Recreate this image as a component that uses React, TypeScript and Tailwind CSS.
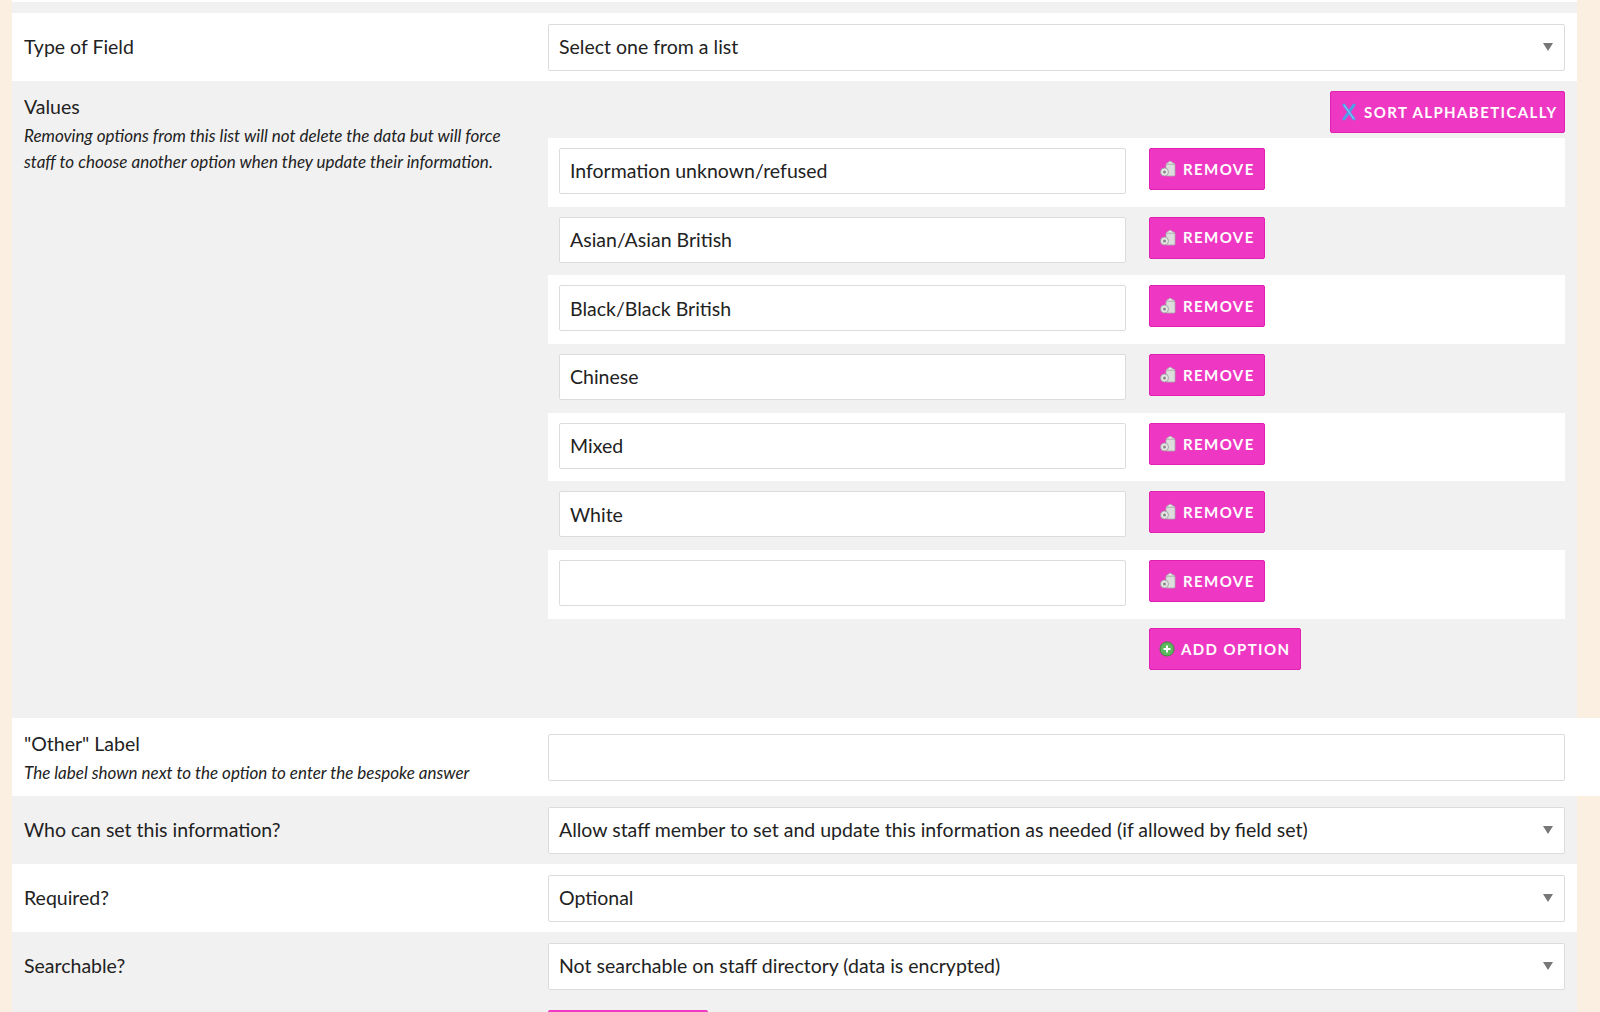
import React from "react";

const Arrow = () => (
  <svg width="10" height="8" viewBox="0 0 10 8" className="absolute right-[11px] top-1/2 -translate-y-1/2"><path d="M0 0h10L5 8z" fill="#777" /></svg>
);

const Select = ({ text }: { text: string }) => (
  <div className="relative h-[47px] w-[1017px] bg-white border border-[#dcdcdc] rounded-[2px] flex items-center pl-[10px] text-[19.5px] text-[#222]">
    {text}
    <Arrow />
  </div>
);

const RemoveIcon = () => (
  <svg width="18" height="18" viewBox="0 0 18 18">
    <rect x="7" y="4" width="9" height="12" rx="1" fill="#ddd" stroke="#aaa" strokeWidth="0.8" />
    <path d="M7 4l4-3 5 3z" fill="#eee" stroke="#aaa" strokeWidth="0.8" />
    <circle cx="5.5" cy="12" r="4" fill="#e6e6e6" stroke="#999" strokeWidth="0.8" />
    <circle cx="5.5" cy="12" r="1.5" fill="#888" />
  </svg>
);

const Btn = ({ icon, label, w }: { icon: React.ReactNode; label: string; w: string }) => (
  <div className={`h-[42px] ${w} bg-[#ee38c3] border border-[#e020b0] rounded-[2px] flex items-center pl-[9px] gap-[6px] text-white font-bold text-[15px] tracking-[1.4px]`}>
    {icon}
    <span>{label}</span>
  </div>
);

const options = ["Information unknown/refused", "Asian/Asian British", "Black/Black British", "Chinese", "Mixed", "White", ""];

export default function App() {
  return (
    <div className="w-[1600px] h-[1012px] overflow-hidden bg-[#fbefe2] text-[#222]" style={{ fontFamily: "Lato, 'Noto Sans', sans-serif" }}>
      <div className="ml-[12px] w-[1565px]">
        <div className="h-[13px] bg-[#f1f1f1] border-t-[2px] border-white" />
        <div className="h-[68px] bg-white flex items-center">
          <div className="w-[536px] pl-[12px] text-[19.5px]">Type of Field</div>
          <Select text="Select one from a list" />
        </div>
        <div className="h-[637px] bg-[#f1f1f1] flex">
          <div className="w-[536px] pl-[12px] pt-[11px] pr-[18px]">
            <div className="text-[19.5px]">Values</div>
            <div className="italic text-[17px] leading-[26px] mt-[2px]">Removing options from this list will not delete the data but will force staff to choose another option when they update their information.</div>
          </div>
          <div className="w-[1017px] pt-[10px]">
            <div className="flex justify-end">
              <Btn w="w-[235px]" label="SORT ALPHABETICALLY" icon={
                <svg width="18" height="18" viewBox="0 0 18 18"><path d="M4 2l10 14M14 2L4 16" stroke="#4aa3e8" strokeWidth="3" strokeLinecap="round" /><path d="M4 2l10 14" stroke="#8fd0ff" strokeWidth="1" /></svg>
              } />
            </div>
            <div className="mt-[5px]">
              {options.map((o, i) => (
                <div key={i} className={`h-[68.7px] flex pt-[10px] ${i % 2 === 0 ? "bg-white" : "bg-[#f1f1f1]"}`}>
                  <div className="ml-[11px] w-[567px] h-[46px] bg-white border border-[#dcdcdc] rounded-[2px] flex items-center pl-[10px] text-[19.5px]">{o}</div>
                  <div className="ml-[23px]">
                    <Btn w="w-[116px]" label="REMOVE" icon={<RemoveIcon />} />
                  </div>
                </div>
              ))}
              <div className="ml-[601px] mt-[9px]">
                <Btn w="w-[152px]" label="ADD OPTION" icon={
                  <svg width="16" height="16" viewBox="0 0 16 16"><circle cx="8" cy="8" r="7" fill="#5cb85c" stroke="#3d8b3d" /><path d="M8 4.5v7M4.5 8h7" stroke="#fff" strokeWidth="2" /></svg>
                } />
              </div>
            </div>
          </div>
        </div>
        <div className="h-[78px] bg-white flex items-center w-[1588px]">
          <div className="w-[536px] pl-[12px]">
            <div className="text-[19.5px]">"Other" Label</div>
            <div className="italic text-[17px] mt-[2px] whitespace-nowrap">The label shown next to the option to enter the bespoke answer</div>
          </div>
          <div className="h-[47px] w-[1017px] bg-white border border-[#dcdcdc] rounded-[2px]" />
        </div>
        <div className="h-[68px] bg-[#f1f1f1] flex items-center">
          <div className="w-[536px] pl-[12px] text-[19.5px]">Who can set this information?</div>
          <Select text="Allow staff member to set and update this information as needed (if allowed by field set)" />
        </div>
        <div className="h-[68px] bg-white flex items-center">
          <div className="w-[536px] pl-[12px] text-[19.5px]">Required?</div>
          <Select text="Optional" />
        </div>
        <div className="h-[68px] bg-[#f1f1f1] flex items-center">
          <div className="w-[536px] pl-[12px] text-[19.5px]">Searchable?</div>
          <Select text="Not searchable on staff directory (data is encrypted)" />
        </div>
        <div className="h-[40px] bg-[#f1f1f1] pt-[10px] pl-[536px]">
          <div className="w-[160px] h-[30px] bg-[#ee38c3] rounded-[2px]" />
        </div>
      </div>
    </div>
  );
}
